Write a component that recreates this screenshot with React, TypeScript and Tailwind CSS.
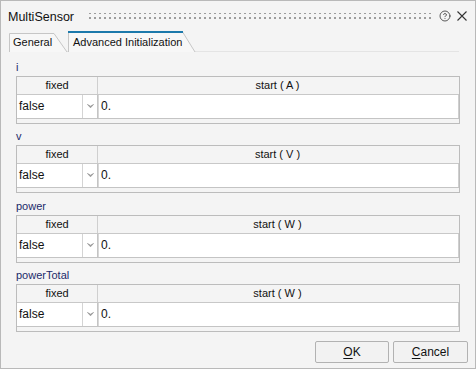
import { CircleHelp } from "lucide-react";

const sections = [
  { name: "i", unit: "A" },
  { name: "v", unit: "V" },
  { name: "power", unit: "W" },
  { name: "powerTotal", unit: "W" },
];

function ParamTable(props: any) {
  const unit = props.unit;
  return (
    <div className="border border-[#bcbcbc] text-[11px] text-[#111]">
      <div className="flex h-[18px] border-b border-[#c8c8c8] bg-[#f4f4f4] leading-[17px]">
        <div className="w-[81px] border-r border-[#cfcfcf] text-center">fixed</div>
        <div className="flex-1 text-center pr-[2px]">start ( {unit} )</div>
      </div>
      <div className="flex h-[24px] border-b border-[#c4c4c4]">
        <div className="flex w-[81px] bg-white border-r border-[#c4c4c4]">
          <div className="w-[66px] border-r border-[#d4d4d4] pl-[2px] text-[12px] leading-[23px]">false</div>
          <div className="flex-1 flex items-center justify-center">
            <svg width="7" height="5" viewBox="0 0 7 5">
              <path d="M0.5 0.5 L3.5 3.8 L6.5 0.5 L3.5 2.2 Z" fill="#9a9a9a" stroke="#9a9a9a" strokeWidth="0.8" />
            </svg>
          </div>
        </div>
        <div className="flex-1 bg-white border-l border-[#d8d8d8] border-r border-r-[#cfcfcf] pl-[2px] text-[12px] leading-[23px]">0.</div>
      </div>
      <div className="h-[4px]" />
    </div>
  );
}

export default function App() {
  return (
    <div
      className="w-[476px] h-[369px] bg-[#f4f4f4] border border-[#b9b9b9] flex flex-col text-[#111]"
      style={{ fontFamily: '"Liberation Sans", Arial, sans-serif' }}
    >
      {/* title bar */}
      <div className="h-[30px] flex items-center pl-[7px] pr-[8px]">
        <span className="text-[12.5px] leading-none pt-[2px]">MultiSensor</span>
        <svg className="ml-[15px] flex-1 h-[9px]">
          <defs>
            <pattern id="grip" width="5" height="5" patternUnits="userSpaceOnUse">
              <rect x="0" y="0" width="2" height="2" fill="#9c9c9c" />
            </pattern>
          </defs>
          <rect x="0" y="1" width="100%" height="7" fill="url(#grip)" />
        </svg>
        <CircleHelp size={12} strokeWidth={1.6} className="ml-[7px] text-[#333]" />
        <svg width="10" height="10" viewBox="0 0 10 10" className="ml-[6px]">
          <path d="M0.5 0.5 L9.5 9.5 M9.5 0.5 L0.5 9.5" stroke="#333" strokeWidth="1.1" />
        </svg>
      </div>

      {/* tabs */}
      <div className="flex items-end h-[21px] ml-[8px] mr-[16px] border-b border-[#e4e4e4] text-[11px]">
        <div className="relative w-[59px] h-[18px]">
          <svg width="59" height="19" className="absolute left-0 top-0">
            <path d="M0.5 19 V0.5 H45 L58 19" fill="#f7f7f7" stroke="#c6c6c6" />
          </svg>
          <span className="relative block pl-[4px] leading-[18px]">General</span>
        </div>
        <div className="relative w-[128px] h-[21px] -mb-px">
          <svg width="128" height="21" className="absolute left-0 top-0">
            <path d="M0.5 21 V0 H114 L127 21" fill="#f7f7f7" stroke="#c6c6c6" />
            <rect x="0" y="0" width="115" height="2" fill="#1c79ab" />
          </svg>
          <span className="relative block pl-[5px] pt-[3px] leading-[17px]">Advanced Initialization</span>
        </div>
      </div>

      {/* parameter sections */}
      <div className="flex flex-col gap-y-[3.34px] px-[15px] pt-[6px]">
        {sections.map((s, index) => (
          <div key={index} className="flex flex-col">
            <div className="h-[16px] text-[11px] leading-[16px] pt-[1px] mb-[2px] text-[#1c2a6a]">{s.name}</div>
            <ParamTable unit={s.unit} />
          </div>
        ))}
      </div>

      {/* buttons */}
      <div className="mt-auto flex justify-end gap-[4px] pr-[7px] pb-[5px]">
        <button className="w-[74px] h-[22px] bg-[#f2f2f2] border border-[#b2b2b2] rounded-[2px] text-[12px]">
          <span className="underline underline-offset-2">O</span>K
        </button>
        <button className="w-[75px] h-[22px] bg-[#f2f2f2] border border-[#b2b2b2] rounded-[2px] text-[12px]">
          <span className="underline underline-offset-2">C</span>ancel
        </button>
      </div>
    </div>
  );
}
